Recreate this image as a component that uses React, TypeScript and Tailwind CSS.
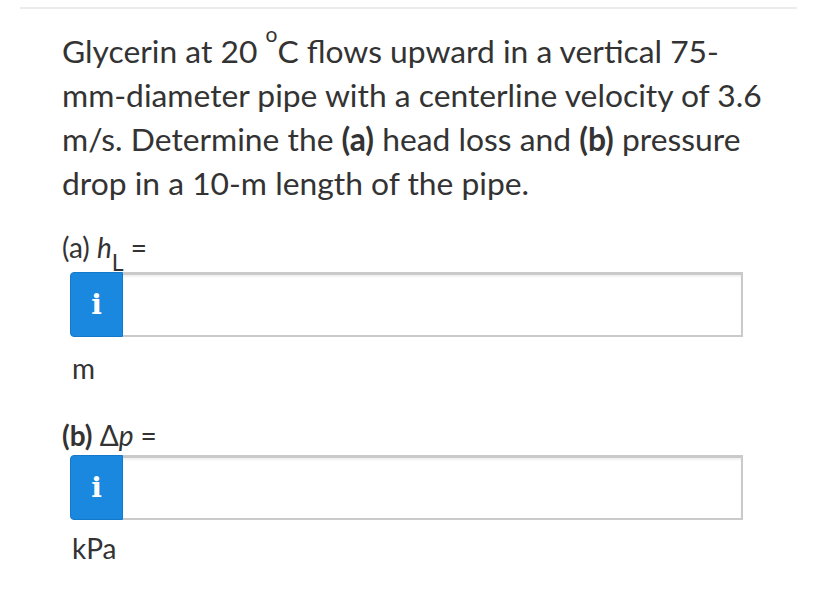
import React from 'react';

const InfoInput: React.FC = () => (
  <div className="ml-[8px] flex h-[65px] w-[673px]">
    <div className="flex w-[53px] items-center justify-center rounded-l-[4px] border border-[#1479c9] bg-[#1b88e0]">
      <span className="text-[28px] font-bold leading-none text-white" style={{ fontFamily: '"DejaVu Serif", serif' }}>i</span>
    </div>
    <div className="flex-1 border-t-[3px] border-r-2 border-b-2 border-[#cacaca] bg-white shadow-[inset_0_2px_2px_rgba(0,0,0,0.06)]" />
  </div>
);

const App: React.FC = () => {
  return (
    <div className="h-[595px] w-[828px] bg-white text-[#333]" style={{ fontFamily: 'Lato, sans-serif' }}>
      {/* top rule */}
      <div className="pt-[7px]">
        <div className="ml-[20px] h-[2px] w-[777px] bg-[#ececec]" />
      </div>

      <div className="w-[778px] pl-[62px]">
        <p className="mt-[20px] text-[31.8px] leading-[44px]">
          Glycerin at 20 <sup className="text-[21px] leading-none align-[11px]">o</sup>C flows upward in a vertical 75-mm-diameter pipe with a centerline velocity of 3.6 m/s. Determine the <b>(a)</b> head loss and <b>(b)</b> pressure drop in a 10-m length of the pipe.
        </p>

        {/* part a */}
        <div className="mt-[26px] text-[28px] leading-[32px]">
          (a) <i>h</i><sub className="text-[23px] not-italic align-[-7px]">L</sub> =
        </div>
        <div className="mt-[9px]">
          <InfoInput />
        </div>
        <div className="mt-[15px] ml-[10px] text-[28px] leading-[32px]">m</div>

        {/* part b */}
        <div className="mt-[35px] text-[28px] leading-[32px]">
          <b>(b)</b> Δ<i>p</i> =
        </div>
        <div className="mt-[4px]">
          <InfoInput />
        </div>
        <div className="mt-[12px] ml-[10px] text-[28px] leading-[32px]">kPa</div>
      </div>
    </div>
  );
};

export default App;
